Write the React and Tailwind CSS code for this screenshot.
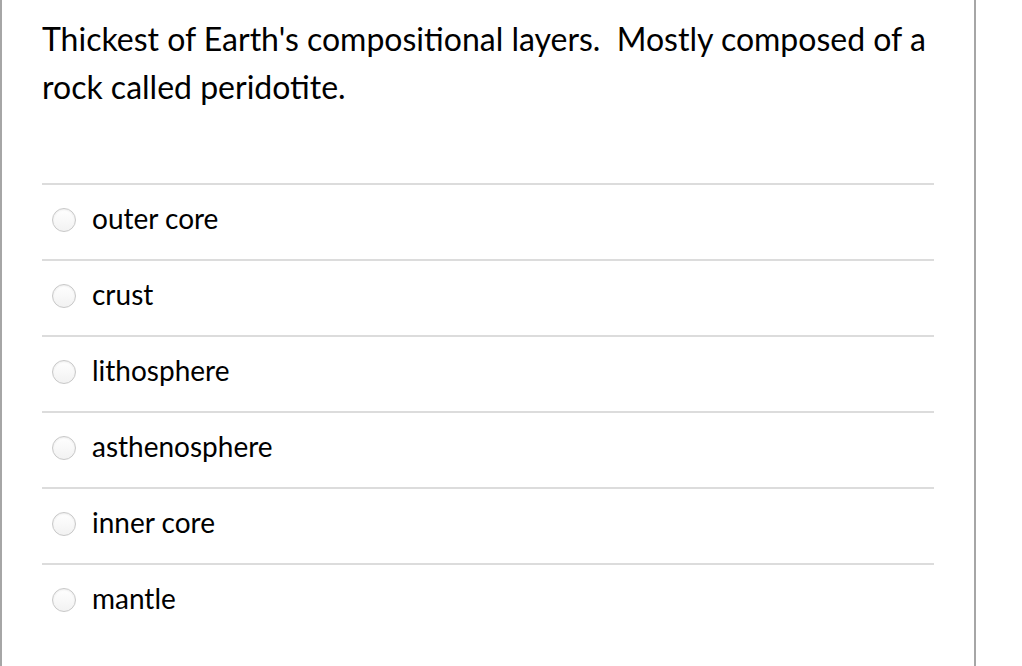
const options = ['outer core', 'crust', 'lithosphere', 'asthenosphere', 'inner core', 'mantle']

export default function App() {
  return (
    <div className="h-[666px] w-[1022px] overflow-hidden bg-white" style={{ fontFamily: 'Lato, "Open Sans", sans-serif' }}>
      <div className="h-full w-[976px] border-x-2 border-[#a6a6a6] px-10 pt-[15px]">
        <p className="text-[32px] leading-[48px] text-black">
          Thickest of Earth's compositional layers.&nbsp; Mostly composed of a rock called peridotite.
        </p>
        <div className="mt-[72px]">
          {options.map((opt) => (
            <div key={opt} className="flex h-[76px] items-center border-t-2 border-[#dcdcdc] pb-1 pl-[10px]">
              <span className="h-6 w-6 shrink-0 rounded-full border border-[#c8c8c8] bg-gradient-to-b from-white to-[#f2f2f2] shadow-[inset_0_1px_2px_rgba(0,0,0,0.08)]" />
              <span className="mb-[4px] ml-4 text-[28px] leading-[36px] text-black">{opt}</span>
            </div>
          ))}
        </div>
      </div>
    </div>
  )
}
